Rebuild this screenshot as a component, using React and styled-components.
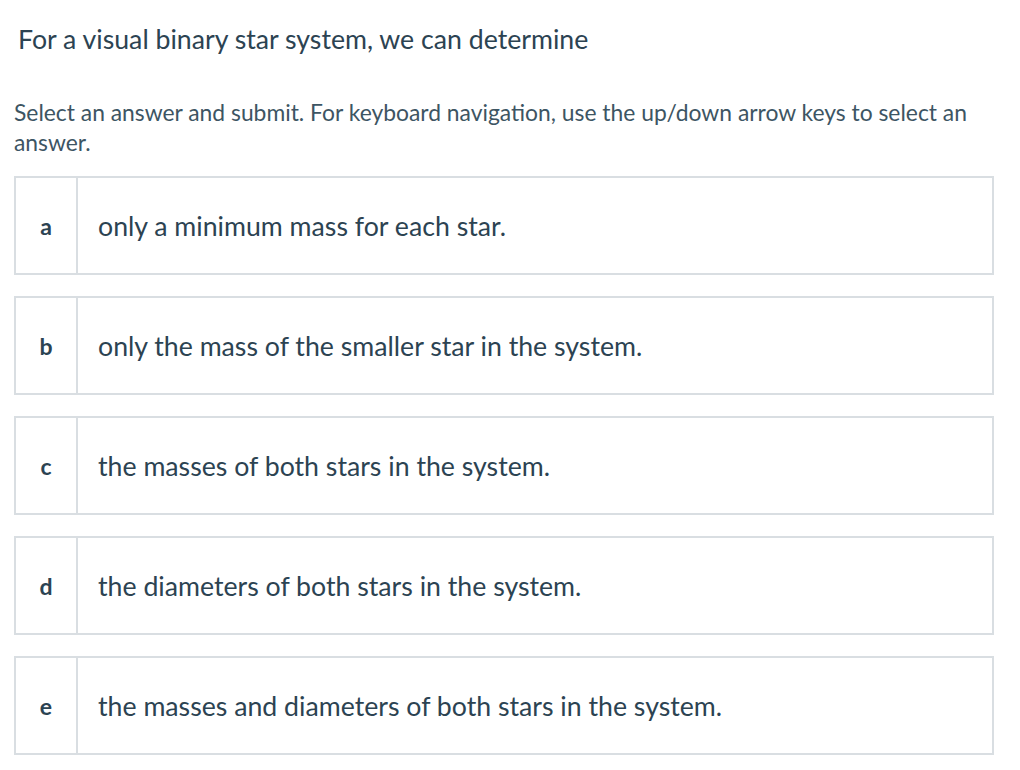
import styled, { createGlobalStyle } from 'styled-components';

const GlobalStyle = createGlobalStyle`
  body {
    margin: 0;
    background: #fff;
    font-family: Lato, "Open Sans", sans-serif;
    color: #2c4352;
  }
`;

const answers = [
  { letter: 'a', text: 'only a minimum mass for each star.' },
  { letter: 'b', text: 'only the mass of the smaller star in the system.' },
  { letter: 'c', text: 'the masses of both stars in the system.' },
  { letter: 'd', text: 'the diameters of both stars in the system.' },
  { letter: 'e', text: 'the masses and diameters of both stars in the system.' },
];

const App = () => (
  <Page>
    <GlobalStyle />
    <Question>For a visual binary star system, we can determine</Question>
    <Hint>
      Select an answer and submit. For keyboard navigation, use the up/down arrow keys to select an answer.
    </Hint>
    <Choices>
      {answers.map((a) => (
        <Choice key={a.letter}>
          <Letter>{a.letter}</Letter>
          <Label>{a.text}</Label>
        </Choice>
      ))}
    </Choices>
  </Page>
);

export default App;

const Page = styled.div`
  width: 980px;
  padding: 21px 0 0 14px;
`;

const Question = styled.h1`
  margin: 0 0 0 4px;
  font-size: 26.7px;
  font-weight: 400;
  line-height: 36px;
  color: #2c4352;
`;

const Hint = styled.p`
  margin: 40px 0 0;
  width: 975px;
  font-size: 22.85px;
  line-height: 30px;
  color: #3d5563;
`;

const Choices = styled.div`
  display: flex;
  flex-direction: column;
  gap: 21px;
  margin-top: 19px;
`;

const Choice = styled.div`
  display: flex;
  height: 99px;
  box-sizing: border-box;
  border: 2px solid #d9dee2;
`;

const Letter = styled.div`
  width: 60px;
  flex: none;
  display: flex;
  align-items: center;
  justify-content: center;
  border-right: 2px solid #d9dee2;
  font-size: 23px;
  font-weight: 700;
  color: #2c4352;
`;

const Label = styled.div`
  display: flex;
  align-items: center;
  padding-left: 20px;
  font-size: 26.7px;
  color: #2c4352;
`;
